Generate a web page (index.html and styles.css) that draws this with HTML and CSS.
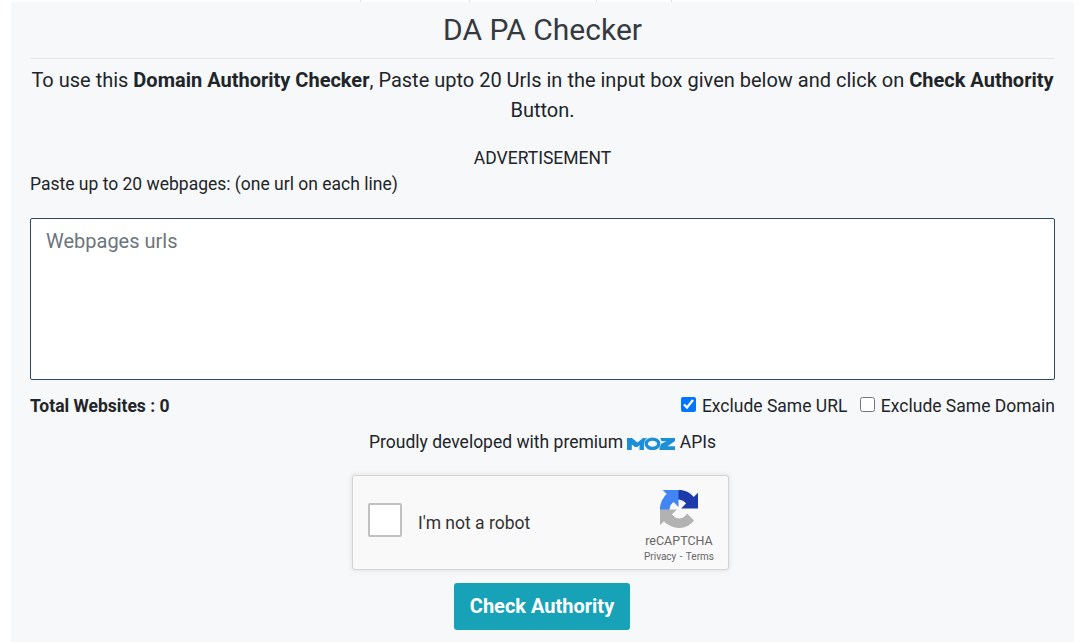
FILE: index.html
```html
<!DOCTYPE html>
<html lang="en">
<head>
<meta charset="utf-8">
<title>DA PA Checker</title>
<link rel="stylesheet" href="styles.css">
</head>
<body>
<div class="ticks"><i></i><i></i><i></i><i></i></div>
<main class="panel">
  <h1 class="title">DA PA Checker</h1>
  <p class="intro">To use this <b>Domain Authority Checker</b>, Paste upto 20 Urls in the input box given below and click on <b>Check Authority</b> Button.</p>
  <div class="ad">ADVERTISEMENT</div>
  <label class="hint" for="urls">Paste up to 20 webpages: (one url on each line)</label>
  <textarea class="urls" id="urls" placeholder="Webpages urls"></textarea>
  <div class="options">
    <b class="total">Total Websites : 0</b>
    <div class="checks">
      <label class="check"><input type="checkbox" checked>Exclude Same URL</label>
      <label class="check"><input type="checkbox">Exclude Same Domain</label>
    </div>
  </div>
  <div class="credit">Proudly developed with premium
    <svg class="moz" viewBox="0 0 48 13" width="48" height="13" aria-label="Moz">
      <path fill="#1c8fd6" d="M0 13V1h5l5.500 4.500L16 1h4a8 7 0 0 0-3 5.500V13h-4.500V8L10.500 10 8 10 4.800 7.500V13z"/>
      <ellipse cx="25.500" cy="6.800" rx="6.300" ry="4.700" fill="none" stroke="#1c8fd6" stroke-width="3.400"/>
      <path fill="#1c8fd6" d="M33 1h15v3l-7.500 5.300H48V13H32.500v-2.800c1-1.100 1.500-2.200 1.700-3.400L39.500 4.200H34.500A8 7 0 0 0 33 1z"/>
    </svg>
    APIs</div>
  <div class="captcha">
    <span class="captcha-box"></span>
    <span class="captcha-label">I'm not a robot</span>
    <div class="captcha-brand">
      <svg class="captcha-logo" viewBox="0 0 64 64" width="38" height="38">
        <path fill="#1c3aa9" d="M64 32l-.012-1.381V4.433l-7.230 7.230C50.840 4.430 41.868 0 32 0 21.680 0 12.510 4.886 6.660 12.480l11.850 11.975c1.160-2.150 2.810-3.996 4.800-5.388 2.070-1.615 5-2.936 8.690-2.936.446 0 .790.052 1.043.150 4.580.361 8.550 2.888 10.890 6.555l-8.388 8.390c10.625-.042 22.627-.066 28.657.012"/>
        <path fill="#4285f4" d="M31.980 0l-1.380.012H4.430l7.230 7.230C4.430 13.160 0 22.130 0 32c0 10.320 4.886 19.490 12.480 25.340l11.975-11.850c-2.150-1.160-3.996-2.810-5.388-4.800-1.615-2.070-2.936-5-2.936-8.690 0-.446.052-.790.150-1.043.361-4.580 2.888-8.550 6.555-10.890l8.390 8.388c-.042-10.625-.066-22.627.012-28.657"/>
        <path fill="#b2b2b2" d="M0 32l.012 1.380v26.187l7.230-7.230C13.160 59.570 22.130 64 32 64c10.320 0 19.490-4.886 25.340-12.480L45.490 39.545c-1.160 2.150-2.810 3.996-4.800 5.388-2.070 1.615-5 2.936-8.690 2.936-.446 0-.790-.052-1.043-.150-4.580-.361-8.550-2.888-10.890-6.555l8.388-8.390c-10.625.042-22.627.066-28.657-.012"/>
      </svg>
      <span class="captcha-name">reCAPTCHA</span>
      <span class="captcha-links">Privacy - Terms</span>
    </div>
  </div>
  <button class="submit" type="button">Check Authority</button>
</main>
</body>
</html>
```
FILE: styles.css
```css
* { box-sizing: border-box; }
html, body { margin: 0; height: 100%; overflow: hidden; }
body {
  background: #fff;
  color: #212529;
  font-family: Roboto, "Liberation Sans", sans-serif;
  font-size: 17.500px;
  line-height: 1.5;
}
.ticks {
  height: 2px;
  padding-left: 360px;
  display: flex;
}
.ticks i { width: 1px; background: #dee2e6; }
.ticks i:nth-child(2) { margin-left: 108px; }
.ticks i:nth-child(3) { margin-left: 126px; }
.ticks i:nth-child(4) { margin-left: 74px; }
.panel {
  margin: 0 9px 0 11px;
  height: 640px;
  padding: 0 19px;
  background: #f7f8fa;
  display: flex;
  flex-direction: column;
}
.title {
  margin: 0;
  height: 57px;
  padding-top: 7px;
  border-bottom: 1px solid #e4e6e9;
  color: #343a40;
  font-size: 30px;
  font-weight: 400;
  line-height: 42px;
  text-align: center;
}
.intro {
  margin: 6px 0 0;
  font-size: 20px;
  line-height: 30px;
  text-align: center;
}
.ad {
  margin-top: 20px;
  line-height: 26px;
  text-align: center;
}
.hint {
  line-height: 26px;
}
.urls {
  display: block;
  margin-top: 21px;
  width: 100%;
  height: 162px;
  padding: 7px 15px;
  border: 1px solid #2c4a5e;
  border-radius: 2px;
  background: #fff;
  font: 400 20px/30px Roboto, "Liberation Sans", sans-serif;
  resize: none;
  outline: none;
}
.urls::placeholder { color: #6c757d; opacity: 1; }
.options {
  margin-top: 13px;
  display: flex;
  justify-content: space-between;
  align-items: center;
  line-height: 26px;
}
.checks { display: flex; gap: 13px; }
.check { display: flex; align-items: center; }
.check input {
  width: 15px;
  height: 15px;
  margin: 0 5.500px 4px 0;
  accent-color: #0075ff;
}
.credit {
  margin-top: 10px;
  line-height: 26px;
  text-align: center;
}
.moz { vertical-align: -2px; }
.captcha {
  margin: 20px 0 0 322px;
  width: 377px;
  height: 95px;
  flex: none;
  display: flex;
  align-items: center;
  padding: 0 13px 0 15px;
  border: 1px solid #d3d3d3;
  border-radius: 3px;
  background: #f9f9f9;
  box-shadow: 0 0 4px 1px rgba(0, 0, 0, .08);
}
.captcha-box {
  width: 34px;
  height: 34px;
  margin-bottom: 5px;
  border: 2px solid #c1c1c1;
  border-radius: 2px;
  background: #fff;
}
.captcha-label {
  margin: 1px 0 0 16px;
  color: #333;
}
.captcha-brand {
  margin: 8px 0 0 auto;
  width: 72px;
  display: flex;
  flex-direction: column;
  align-items: center;
  color: #666;
}
.captcha-logo { margin-top: -1px; }
.captcha-name { margin-top: 6px; font-size: 12.500px; line-height: 14px; }
.captcha-links { margin-top: 3px; font-size: 10px; line-height: 12px; white-space: nowrap; word-spacing: 1px; }
.submit {
  margin: 13px 0 0 424px;
  width: 176px;
  height: 47px;
  flex: none;
  padding: 0 0 2px;
  border: 0;
  border-radius: 3px;
  background: #17a2b8;
  color: #fff;
  font: 700 20px/1.5 Roboto, "Liberation Sans", sans-serif;
}
```
